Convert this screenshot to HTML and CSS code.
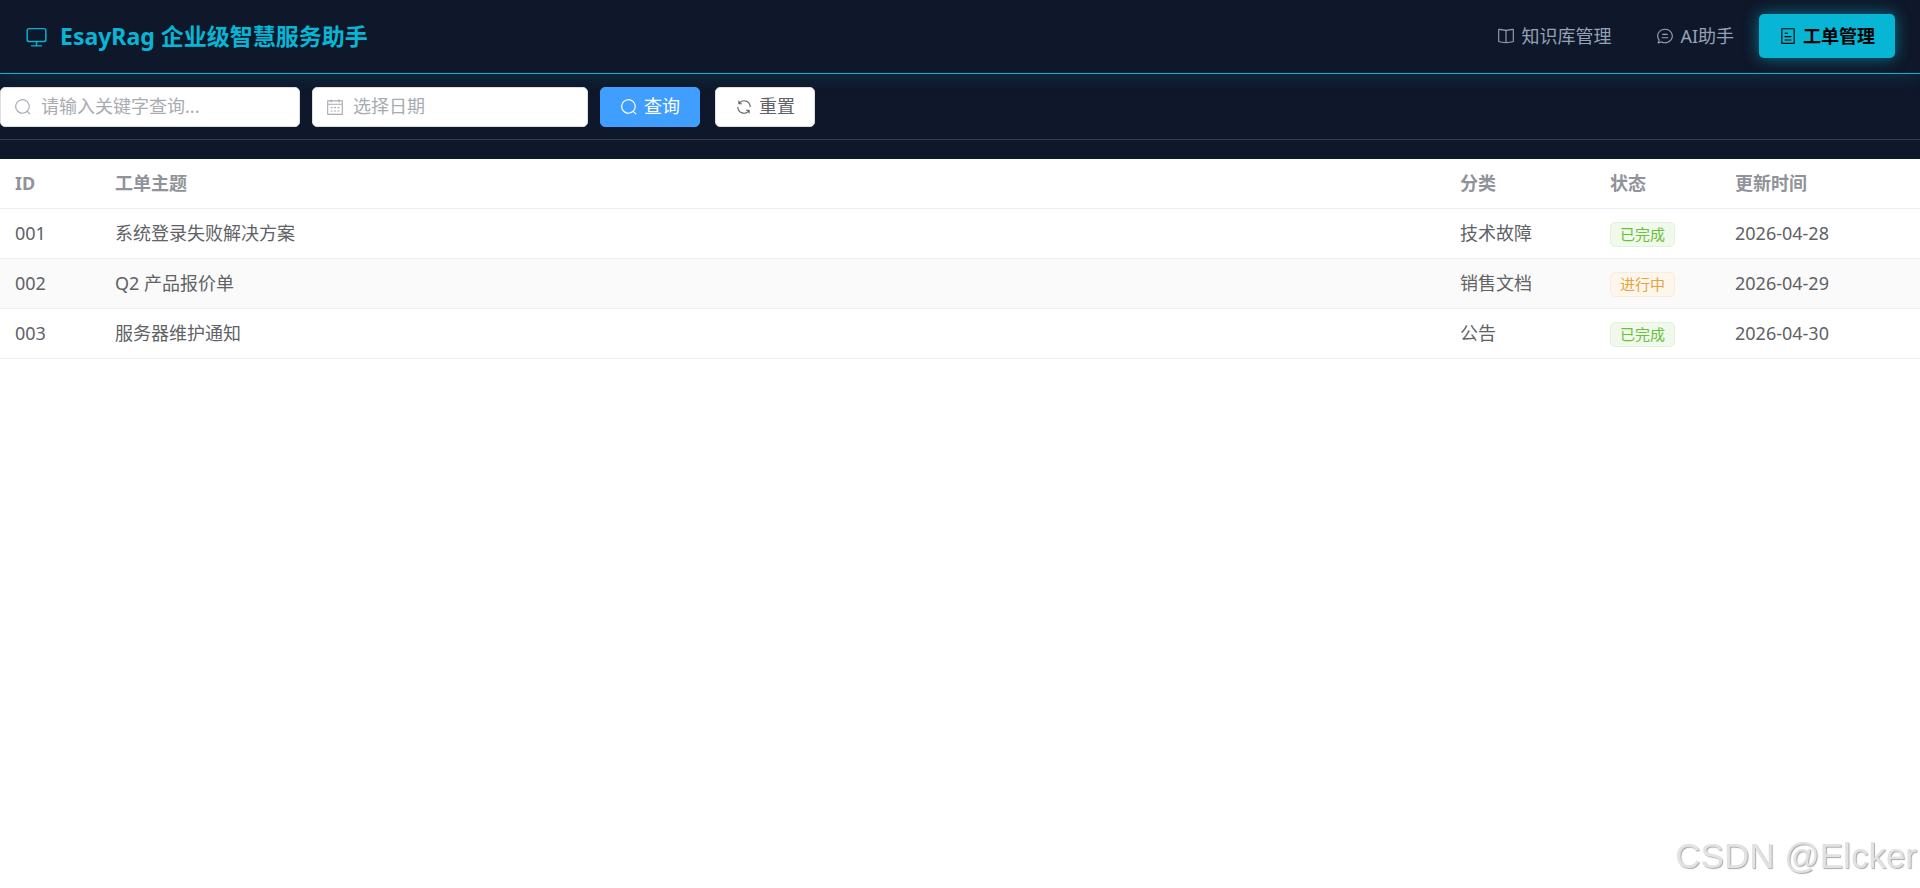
FILE: index.html
```html
<!DOCTYPE html>
<html lang="zh-CN">
<head>
    <meta charset="UTF-8">
    <meta name="viewport" content="width=device-width, initial-scale=1.0">
    <title>EsayRag 企业级智慧服务助手</title>
    <link rel="stylesheet" href="styles.css">
</head>
<body>
    <header class="header">
        <h1 class="logo">
            <svg class="icon logo-icon" viewBox="0 0 1024 1024"><path d="M544 768v128h192a32 32 0 1 1 0 64H288a32 32 0 1 1 0-64h192V768H192A128 128 0 0 1 64 640V256a128 128 0 0 1 128-128h640a128 128 0 0 1 128 128v384a128 128 0 0 1-128 128zM192 192a64 64 0 0 0-64 64v384a64 64 0 0 0 64 64h640a64 64 0 0 0 64-64V256a64 64 0 0 0-64-64z"/></svg>
            <span>EsayRag 企业级智慧服务助手</span>
        </h1>
        <nav class="nav">
            <a href="#" class="nav-item">
                <svg class="icon" viewBox="0 0 1024 1024"><path d="m512 863.36 384-54.848v-638.72L525.568 222.72a96 96 0 0 1-27.136 0L128 169.792v638.72zM137.024 106.432l370.432 52.928a32 32 0 0 0 9.088 0l370.432-52.928A64 64 0 0 1 960 169.792v638.72a64 64 0 0 1-54.976 63.36l-388.48 55.488a32 32 0 0 1-9.088 0l-388.48-55.488A64 64 0 0 1 64 808.512v-638.72a64 64 0 0 1 73.024-63.36z"/><path d="M480 192h64v704h-64z"/></svg>
                <span>知识库管理</span>
            </a>
            <a href="#" class="nav-item">
                <svg class="icon" viewBox="0 0 1024 1024"><path d="m174.72 855.68 135.296-45.12 23.68 11.84C388.096 849.536 448.576 864 512 864c211.84 0 384-166.784 384-352S723.84 160 512 160 128 326.784 128 512c0 69.12 24.96 139.264 70.848 199.232l22.08 28.8-46.272 115.584zm-45.248 82.56A32 32 0 0 1 89.6 896l58.368-145.92C94.72 680.32 64 596.864 64 512 64 299.904 256 96 512 96s448 203.904 448 416-192 416-448 416a461.056 461.056 0 0 1-206.912-48.384l-175.616 58.56z"/><path d="M352 576h320q32 0 32 32t-32 32H352q-32 0-32-32t32-32m32-192h256q32 0 32 32t-32 32H384q-32 0-32-32t32-32"/></svg>
                <span>AI助手</span>
            </a>
            <a href="#" class="nav-item active">
                <svg class="icon" viewBox="0 0 1024 1024"><path d="M192 128v768h640V128zm-32-64h704a32 32 0 0 1 32 32v832a32 32 0 0 1-32 32H160a32 32 0 0 1-32-32V96a32 32 0 0 1 32-32m160 448h384v64H320zm0-192h192v64H320zm0 384h384v64H320z"/></svg>
                <span>工单管理</span>
            </a>
        </nav>
    </header>

    <form class="search-bar">
        <label class="input-box keyword">
            <svg class="icon" viewBox="0 0 1024 1024"><path d="m795.904 750.72 124.992 124.928a32 32 0 0 1-45.248 45.248L750.656 795.904a416 416 0 1 1 45.248-45.248zM480 832a352 352 0 1 0 0-704 352 352 0 0 0 0 704z"/></svg>
            <input type="text" placeholder="请输入关键字查询..." aria-label="关键字">
        </label>
        <label class="input-box date">
            <svg class="icon" viewBox="0 0 1024 1024"><path d="M128 384v512h768V192H768v32a32 32 0 1 1-64 0v-32H320v32a32 32 0 0 1-64 0v-32H128v128h768v64zm192-256h384V96a32 32 0 1 1 64 0v32h160a32 32 0 0 1 32 32v768a32 32 0 0 1-32 32H96a32 32 0 0 1-32-32V160a32 32 0 0 1 32-32h160V96a32 32 0 0 1 64 0zm-32 384h64a32 32 0 0 1 0 64h-64a32 32 0 0 1 0-64m0 192h64a32 32 0 1 1 0 64h-64a32 32 0 1 1 0-64m192-192h64a32 32 0 0 1 0 64h-64a32 32 0 0 1 0-64m0 192h64a32 32 0 1 1 0 64h-64a32 32 0 1 1 0-64m192-192h64a32 32 0 1 1 0 64h-64a32 32 0 1 1 0-64m0 192h64a32 32 0 1 1 0 64h-64a32 32 0 1 1 0-64"/></svg>
            <input type="text" placeholder="选择日期" aria-label="日期">
        </label>
        <div class="buttons">
            <button type="button" class="btn btn-primary">
                <svg class="icon" viewBox="0 0 1024 1024"><path d="m795.904 750.72 124.992 124.928a32 32 0 0 1-45.248 45.248L750.656 795.904a416 416 0 1 1 45.248-45.248zM480 832a352 352 0 1 0 0-704 352 352 0 0 0 0 704z"/></svg>
                <span>查询</span>
            </button>
            <button type="reset" class="btn">
                <svg class="icon" viewBox="0 0 1024 1024"><path d="M771.776 794.88A384 384 0 0 1 128 512h64a320 320 0 0 0 555.712 216.448H654.72a32 32 0 1 1 0-64h149.056a32 32 0 0 1 32 32v148.928a32 32 0 1 1-64 0v-50.56zM276.288 295.616h92.992a32 32 0 0 1 0 64H220.16a32 32 0 0 1-32-32V178.56a32 32 0 0 1 64 0v50.56A384 384 0 0 1 896.128 512h-64a320 320 0 0 0-555.776-216.384z"/></svg>
                <span>重置</span>
            </button>
        </div>
    </form>

    <main class="content">
        <table class="ticket-table">
            <thead>
                <tr>
                    <th class="col-id">ID</th>
                    <th>工单主题</th>
                    <th class="col-type">分类</th>
                    <th class="col-status">状态</th>
                    <th class="col-time">更新时间</th>
                </tr>
            </thead>
            <tbody>
                <tr>
                    <td>001</td>
                    <td>系统登录失败解决方案</td>
                    <td>技术故障</td>
                    <td class="status"><span class="tag success">已完成</span></td>
                    <td>2026-04-28</td>
                </tr>
                <tr>
                    <td>002</td>
                    <td>Q2 产品报价单</td>
                    <td>销售文档</td>
                    <td class="status"><span class="tag warning">进行中</span></td>
                    <td>2026-04-29</td>
                </tr>
                <tr>
                    <td>003</td>
                    <td>服务器维护通知</td>
                    <td>公告</td>
                    <td class="status"><span class="tag success">已完成</span></td>
                    <td>2026-04-30</td>
                </tr>
            </tbody>
        </table>
    </main>

    <div class="watermark">CSDN @Elcker</div>
</body>
</html>
```

FILE: styles.css
```css
* {
    box-sizing: border-box;
}
body {
    margin: 0;
    min-height: 100vh;
    display: flex;
    flex-direction: column;
    background: #0f172a;
    color: #606266;
    font-family: "Noto Sans", "Noto Sans CJK SC", sans-serif;
    font-size: 18px;
    line-height: 24px;
}
.icon {
    width: 18px;
    height: 18px;
    flex: none;
    fill: currentColor;
}

/* 顶部导航 */
.header {
    display: flex;
    align-items: center;
    justify-content: space-between;
    padding: 14px 25px 15px;
    border-bottom: 1px solid #06b6d4;
    box-shadow: 0 0 20px rgba(6, 182, 212, 0.2);
}
.logo {
    display: flex;
    align-items: center;
    gap: 12px;
    margin: 0;
    color: #06b6d4;
    font-size: 23px;
    font-weight: bold;
}
.logo-icon {
    width: 23px;
    height: 23px;
}
.nav {
    display: flex;
    gap: 5px;
}
.nav-item {
    display: flex;
    align-items: center;
    gap: 6px;
    padding: 10px 20px;
    border-radius: 5px;
    color: #94a3b8;
    text-decoration: none;
}
.nav-item.active {
    background: #06b6d4;
    color: #000;
    font-weight: bold;
    box-shadow: 0 0 15px rgba(6, 182, 212, 0.6);
}

/* 查询条件 */
.search-bar {
    display: flex;
    gap: 12px;
    padding: 13px 0 12px;
    border-bottom: 1px solid #334155;
}
.input-box {
    display: flex;
    align-items: center;
    gap: 9px;
    height: 40px;
    padding: 0 13px;
    border: 1px solid #dcdfe6;
    border-radius: 5px;
    background: #fff;
    color: #a8abb2;
}
.keyword {
    width: 300px;
}
.date {
    width: 276px;
}
.input-box input {
    flex: 1;
    min-width: 0;
    padding: 0 0 2px;
    border: none;
    outline: none;
    background: none;
    color: #606266;
    font: inherit;
}
.input-box input::placeholder {
    color: #a8abb2;
}
.buttons {
    display: flex;
    gap: 15px;
}
.btn {
    display: flex;
    align-items: center;
    gap: 6px;
    height: 40px;
    padding: 0 19px;
    border: 1px solid #dcdfe6;
    border-radius: 5px;
    background: #fff;
    color: #606266;
    font: inherit;
    cursor: pointer;
}
.btn span {
    padding-bottom: 2px;
}
.btn-primary {
    border-color: #409eff;
    background: #409eff;
    color: #fff;
}

/* 工单列表 */
.content {
    flex: 1;
    margin-top: 19px;
    background: #fff;
}
.ticket-table {
    width: 100%;
    table-layout: fixed;
    border-spacing: 0;
}
.ticket-table th,
.ticket-table td {
    height: 50px;
    padding: 0 15px 2px;
    border-bottom: 1px solid #ebeef5;
    text-align: left;
}
.ticket-table th {
    color: #909399;
    font-weight: bold;
}
.ticket-table .status {
    padding-bottom: 0;
}
.ticket-table tbody tr:nth-child(even) {
    background: #fafafa;
}
.col-id {
    width: 100px;
}
.col-type {
    width: 150px;
}
.col-status {
    width: 125px;
}
.col-time {
    width: 200px;
}
.tag {
    display: inline-flex;
    align-items: center;
    height: 25px;
    padding: 0 9px;
    border: 1px solid;
    border-radius: 5px;
    font-size: 15px;
    vertical-align: middle;
}
.success {
    background: #f0f9eb;
    border-color: #e1f3d8;
    color: #67c23a;
}
.warning {
    background: #fdf6ec;
    border-color: #faecd8;
    color: #e6a23c;
}

.watermark {
    position: fixed;
    right: 3px;
    bottom: 12px;
    color: #e2e2e2;
    font-family: "Liberation Sans", Arial, sans-serif;
    font-size: 35px;
    line-height: 40px;
    text-shadow: 1px 1px 1px #aaa;
}
```
